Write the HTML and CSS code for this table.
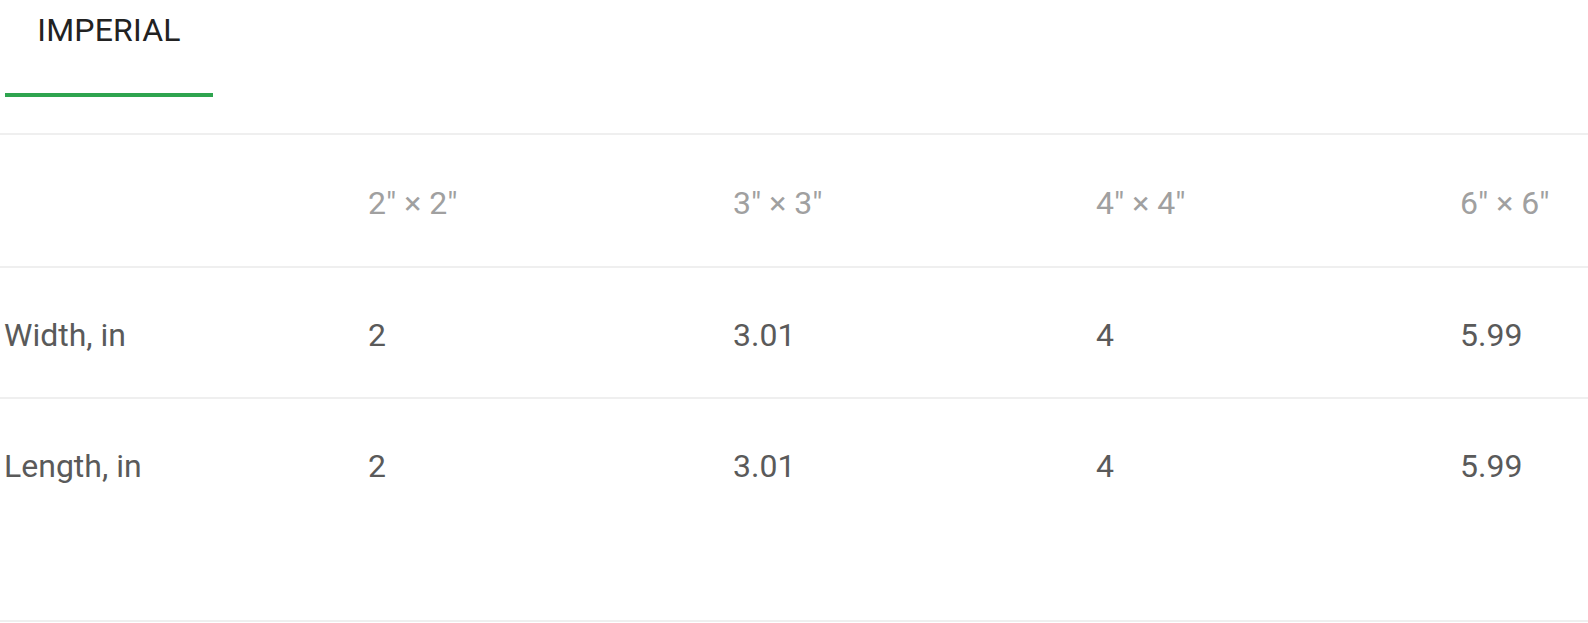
FILE: index.html
```html
<!DOCTYPE html>
<html>
<head>
<meta charset="utf-8">
<link rel="stylesheet" href="styles.css">
</head>
<body>
<div class="tabs">
  <div class="tab active">IMPERIAL</div>
</div>
<div class="table">
  <div class="row head">
    <div class="cell label"></div>
    <div class="cell">2" × 2"</div>
    <div class="cell">3" × 3"</div>
    <div class="cell">4" × 4"</div>
    <div class="cell">6" × 6"</div>
  </div>
  <div class="row">
    <div class="cell label">Width, in</div>
    <div class="cell">2</div>
    <div class="cell">3.01</div>
    <div class="cell">4</div>
    <div class="cell">5.99</div>
  </div>
  <div class="row last">
    <div class="cell label">Length, in</div>
    <div class="cell">2</div>
    <div class="cell">3.01</div>
    <div class="cell">4</div>
    <div class="cell">5.99</div>
  </div>
</div>
</body>
</html>
```
FILE: styles.css
```css
html, body {
  margin: 0;
  padding: 0;
  background: #fff;
  font-family: Roboto, "Liberation Sans", sans-serif;
}
.tabs {
  display: flex;
  padding-left: 5px;
  height: 135px;
  border-bottom: 2px solid #efefef;
  box-sizing: border-box;
}
.tab {
  width: 208px;
  height: 97px;
  box-sizing: border-box;
  text-align: center;
  font-size: 32px;
  color: #222;
  padding-top: 11px;
  letter-spacing: 0.2px;
}
.tab.active {
  border-bottom: 4px solid #2ea44f;
}
.row {
  display: grid;
  grid-template-columns: 363px 365px 363px 364px 1fr;
  height: 131px;
  align-items: center;
  border-bottom: 2px solid #efefef;
  box-sizing: border-box;
  font-size: 32px;
  color: #5a5a5a;
  padding-top: 4px;
}
.row.head {
  height: 133px;
  color: #a0a0a0;
}
.row.last {
  height: 223px;
  align-items: start;
  padding-top: 48px;
}
.cell {
  padding-left: 5px;
  white-space: nowrap;
}
.cell.label {
  padding-left: 4px;
}
```
